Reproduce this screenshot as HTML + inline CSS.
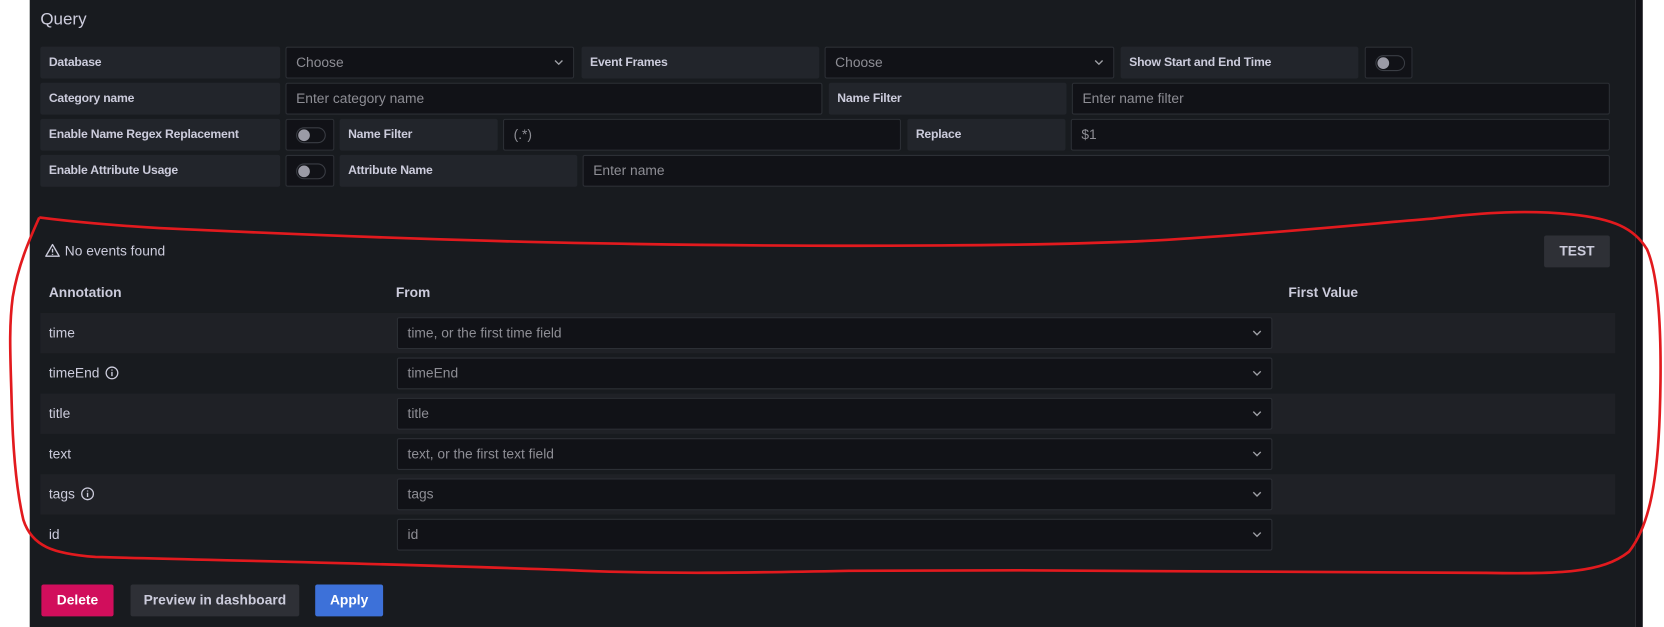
<!DOCTYPE html>
<html><head><meta charset="utf-8"><style>
*{box-sizing:border-box;margin:0;padding:0}
html,body{width:1664px;height:627px;overflow:hidden;background:#fff;font-family:"Liberation Sans",sans-serif}
#s{position:absolute;left:0;top:0;width:1568px;height:591px;transform:scale(1.06122,1.0609);transform-origin:0 0}
.p{position:absolute;left:28px;top:0;width:1513px;height:591px;background:#181b1f}
.strip{position:absolute;left:1541px;top:0;width:7px;height:591px;background:#111217}
.a{position:absolute}
.lb{position:absolute;background:#22252b;border-radius:2px;color:#ccccdc;font-weight:bold;font-size:11.5px;line-height:30px;padding-left:8px;height:30px;letter-spacing:-0.2px}
.in{position:absolute;background:#111217;border:1px solid #2c2f35;border-radius:2px;color:#8e8e95;font-size:13px;line-height:28px;padding-left:9px;height:30px}
.tg{position:absolute;background:#111217;border:1px solid #2c2f35;border-radius:2px;height:30px}
.tg i{position:absolute;left:9px;top:7px;width:28px;height:15px;border:1px solid #3a3d44;border-radius:8px}
.tg i:after{content:"";position:absolute;left:1px;top:1px;width:11px;height:11px;border-radius:50%;background:#9b9ba6}
.t{position:absolute;color:#ccccdc;font-size:13px}
.row{position:absolute;left:38px;width:1484px;height:38px}
.sh{background:#1f2126}
.btn{position:absolute;top:551px;height:30px;line-height:30px;color:#fff;font-weight:bold;font-size:13px;text-align:center;border-radius:2px}
svg.chev{position:absolute;right:9px;top:11px}
</style></head><body><div id="s">
<div class="p"></div><div class="strip"></div>
<div class="t" style="left:38px;top:10px;font-size:16px">Query</div>

<div class="lb" style="left:38px;top:44px;width:226px">Database</div>
<div class="in" style="left:269px;top:44px;width:272px">Choose<svg class="chev" width="9" height="6" viewBox="0 0 9 6"><path d="M1 1l3.5 3.5L8 1" stroke="#9fa0a6" fill="none" stroke-width="1.3"/></svg></div>
<div class="lb" style="left:548px;top:44px;width:224px">Event Frames</div>
<div class="in" style="left:777px;top:44px;width:273px">Choose<svg class="chev" width="9" height="6" viewBox="0 0 9 6"><path d="M1 1l3.5 3.5L8 1" stroke="#9fa0a6" fill="none" stroke-width="1.3"/></svg></div>
<div class="lb" style="left:1056px;top:44px;width:224px">Show Start and End Time</div>
<div class="tg" style="left:1286px;top:44px;width:45px"><i></i></div>

<div class="lb" style="left:38px;top:78px;width:226px">Category name</div>
<div class="in" style="left:269px;top:78px;width:506px">Enter category name</div>
<div class="lb" style="left:781px;top:78px;width:224px">Name Filter</div>
<div class="in" style="left:1010px;top:78px;width:507px">Enter name filter</div>

<div class="lb" style="left:38px;top:112px;width:226px">Enable Name Regex Replacement</div>
<div class="tg" style="left:269px;top:112px;width:46px"><i></i></div>
<div class="lb" style="left:320px;top:112px;width:149px">Name Filter</div>
<div class="in" style="left:474px;top:112px;width:375px">(.*)</div>
<div class="lb" style="left:855px;top:112px;width:149px">Replace</div>
<div class="in" style="left:1009px;top:112px;width:508px">$1</div>

<div class="lb" style="left:38px;top:146px;width:226px">Enable Attribute Usage</div>
<div class="tg" style="left:269px;top:146px;width:46px"><i></i></div>
<div class="lb" style="left:320px;top:146px;width:224px">Attribute Name</div>
<div class="in" style="left:549px;top:146px;width:968px">Enter name</div>

<svg class="a" style="left:42px;top:229px" width="15" height="14" viewBox="0 0 15 14"><path d="M7.5 1.5L13.8 12.5H1.2Z" fill="none" stroke="#ccccdc" stroke-width="1.3" stroke-linejoin="round"/><path d="M7.5 5.5v3.5M7.5 10.3v1" stroke="#ccccdc" stroke-width="1.3"/></svg>
<div class="t" style="left:61px;top:229px">No events found</div>
<div class="btn" style="left:1455px;top:222px;width:62px;background:#2e3036;color:#ccccdc">TEST</div>

<div class="t" style="left:46px;top:268px;font-weight:bold">Annotation</div>
<div class="t" style="left:373px;top:268px;font-weight:bold">From</div>
<div class="t" style="left:1214px;top:268px;font-weight:bold">First Value</div>

<div class="row sh" style="top:295px"></div>
<div class="row" style="top:333px"></div>
<div class="row sh" style="top:371px"></div>
<div class="row" style="top:409px"></div>
<div class="row sh" style="top:447px"></div>
<div class="row" style="top:485px"></div>

<div class="t" style="left:46px;top:306px">time</div>
<div class="t" style="left:46px;top:344px">timeEnd <svg width="13" height="13" viewBox="0 0 13 13" style="vertical-align:-2px;margin-left:2px"><circle cx="6.5" cy="6.5" r="5.5" fill="none" stroke="#ccccdc" stroke-width="1.2"/><path d="M6.5 5.5v4M6.5 3.3v1" stroke="#ccccdc" stroke-width="1.3"/></svg></div>
<div class="t" style="left:46px;top:382px">title</div>
<div class="t" style="left:46px;top:420px">text</div>
<div class="t" style="left:46px;top:458px">tags <svg width="13" height="13" viewBox="0 0 13 13" style="vertical-align:-2px;margin-left:2px"><circle cx="6.5" cy="6.5" r="5.5" fill="none" stroke="#ccccdc" stroke-width="1.2"/><path d="M6.5 5.5v4M6.5 3.3v1" stroke="#ccccdc" stroke-width="1.3"/></svg></div>
<div class="t" style="left:46px;top:496px">id</div>

<div class="in" style="left:374px;top:299px;width:825px">time, or the first time field<svg class="chev" width="9" height="6" viewBox="0 0 9 6"><path d="M1 1l3.5 3.5L8 1" stroke="#9fa0a6" fill="none" stroke-width="1.3"/></svg></div>
<div class="in" style="left:374px;top:337px;width:825px">timeEnd<svg class="chev" width="9" height="6" viewBox="0 0 9 6"><path d="M1 1l3.5 3.5L8 1" stroke="#9fa0a6" fill="none" stroke-width="1.3"/></svg></div>
<div class="in" style="left:374px;top:375px;width:825px">title<svg class="chev" width="9" height="6" viewBox="0 0 9 6"><path d="M1 1l3.5 3.5L8 1" stroke="#9fa0a6" fill="none" stroke-width="1.3"/></svg></div>
<div class="in" style="left:374px;top:413px;width:825px">text, or the first text field<svg class="chev" width="9" height="6" viewBox="0 0 9 6"><path d="M1 1l3.5 3.5L8 1" stroke="#9fa0a6" fill="none" stroke-width="1.3"/></svg></div>
<div class="in" style="left:374px;top:451px;width:825px">tags<svg class="chev" width="9" height="6" viewBox="0 0 9 6"><path d="M1 1l3.5 3.5L8 1" stroke="#9fa0a6" fill="none" stroke-width="1.3"/></svg></div>
<div class="in" style="left:374px;top:489px;width:825px">id<svg class="chev" width="9" height="6" viewBox="0 0 9 6"><path d="M1 1l3.5 3.5L8 1" stroke="#9fa0a6" fill="none" stroke-width="1.3"/></svg></div>

<div class="btn" style="left:39px;width:68px;background:#d10e5c">Delete</div>
<div class="btn" style="left:123px;width:159px;background:#2e3036;color:#ccccdc">Preview in dashboard</div>
<div class="btn" style="left:297px;width:64px;background:#3d71d9">Apply</div>

<svg class="a" style="left:0;top:0" width="1568" height="591" viewBox="0 0 1568 591"><path d="M37 205 C60 208 100 212 150 215 C300 222 450 228 600 230 C800 233 1000 232 1100 226 C1200 220 1300 210 1350 206 C1400 200 1440 198 1480 202 C1520 206 1540 215 1552 235 C1565 265 1566 330 1564 390 C1562 450 1555 495 1535 520 C1510 540 1470 541 1400 540 C1200 538 1000 537 800 538 C700 540 630 541 550 538 C400 532 200 528 90 525 C50 522 30 515 22 490 C15 460 12 420 11 380 C10 340 8 310 12 280 C17 250 28 225 37 205" fill="none" stroke="#e21a1e" stroke-width="2.5"/></svg>
</div></body></html>
